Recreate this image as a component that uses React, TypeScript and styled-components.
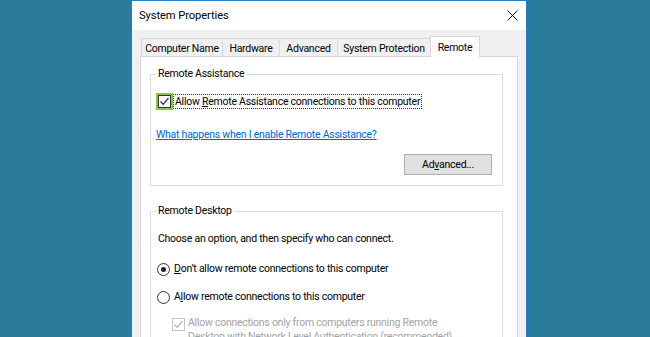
import React from "react";
import styled, { createGlobalStyle } from "styled-components";

const GlobalStyle = createGlobalStyle`
  html, body {
    margin: 0;
    padding: 0;
  }
  body {
    background: #2b7c9c;
    font-family: Roboto, "Liberation Sans", sans-serif;
    font-size: 10.5px;
    letter-spacing: -0.25px;
    color: #000;
    overflow: hidden;
  }
`;

const Desktop = styled.div`
  width: 650px;
  height: 337px;
  box-sizing: border-box;
  padding-left: 131px;
  overflow: hidden;
  background: #2b7c9c;
`;

const Window = styled.div`
  width: 396px;
  height: 420px;
  box-sizing: border-box;
  border: 1px solid #1d7fcf;
  background: #f0f0f0;
  display: flex;
  flex-direction: column;
`;

const TitleBar = styled.div`
  height: 29px;
  flex: none;
  display: flex;
  align-items: center;
  justify-content: space-between;
  padding-left: 7px;
  background: #fff;
  font-size: 11.2px;
  letter-spacing: -0.1px;
`;

const CloseButton = styled.div`
  width: 28px;
  height: 29px;
  display: flex;
  align-items: center;
  justify-content: center;
`;

const Client = styled.div`
  flex: 1;
  display: flex;
  flex-direction: column;
  padding: 6px 8px 0 8px;
`;

const TabStrip = styled.div`
  height: 20px;
  display: flex;
  align-items: flex-end;
  padding-left: 1px;
`;

const Tab = styled.div<{ $w: number; $active?: boolean }>`
  width: ${(p) => p.$w}px;
  height: ${(p) => (p.$active ? 21 : 18)}px;
  margin-right: -1px;
  margin-bottom: ${(p) => (p.$active ? -1 : 0)}px;
  box-sizing: border-box;
  border: 1px solid #d9d9d9;
  border-bottom: none;
  background: ${(p) => (p.$active ? "#fff" : "#f0f0f0")};
  position: relative;
  z-index: ${(p) => (p.$active ? 2 : 1)};
  display: flex;
  align-items: center;
  justify-content: center;
  padding-top: ${(p) => (p.$active ? 0 : 1)}px;
  white-space: nowrap;
`;

const Panel = styled.div`
  flex: 1;
  background: #fff;
  border: 1px solid #d9d9d9;
  padding: 10px 14px 0 9px;
`;

const GroupBox = styled.fieldset<{ $gap?: number }>`
  margin: ${(p) => p.$gap ?? 0}px 0 0 0;
  padding: 0 10px 10px 5px;
  border: 1px solid #dcdcdc;
  min-width: 0;
  display: flex;
  flex-direction: column;
`;

const Legend = styled.legend`
  padding: 0 2px;
  line-height: 14px;
`;

const Row = styled.div<{ $top: number; $indent?: number }>`
  display: flex;
  align-items: center;
  margin-top: ${(p) => p.$top}px;
  margin-left: ${(p) => p.$indent ?? 0}px;
  line-height: 14px;
`;

const Box = styled.span<{ $focus?: boolean; $disabled?: boolean }>`
  width: 13px;
  height: 13px;
  flex: none;
  box-sizing: border-box;
  margin-left: 2px;
  border: 1px solid ${(p) => (p.$disabled ? "#c4c4c4" : "#333")};
  background: #fff;
  outline: ${(p) => (p.$focus ? "2px solid #86c44a" : "none")};
  display: flex;
  align-items: center;
  justify-content: center;
`;

const FocusLabel = styled.span`
  margin-left: 2px;
  padding: 0 1px;
  line-height: 13px;
  border: 1px dotted #333;
`;

const Link = styled.a`
  color: #0066cc;
  text-decoration: underline;
  line-height: 14px;
  margin-top: 19px;
`;

const ButtonRow = styled.div`
  display: flex;
  justify-content: flex-end;
  margin-top: 12px;
`;

const Button = styled.div`
  width: 88px;
  height: 21px;
  box-sizing: border-box;
  border: 1px solid #adadad;
  background: #e1e1e1;
  display: flex;
  align-items: center;
  justify-content: center;
`;

const Text = styled.div<{ $top: number }>`
  margin-top: ${(p) => p.$top}px;
  line-height: 14px;
  padding-left: 2px;
`;

const Radio = styled.span<{ $on?: boolean }>`
  width: 13px;
  height: 13px;
  flex: none;
  box-sizing: border-box;
  margin-left: 1px;
  border: 1px solid #333;
  border-radius: 50%;
  background: #fff;
  display: flex;
  align-items: center;
  justify-content: center;
  &::after {
    content: "";
    width: 5px;
    height: 5px;
    border-radius: 50%;
    background: ${(p) => (p.$on ? "#222" : "transparent")};
  }
`;

const RadioLabel = styled.span`
  margin-left: 4px;
`;

const SubOption = styled.div`
  display: flex;
  align-items: flex-start;
  margin-top: 12px;
  margin-left: 14px;
  line-height: 14px;
  color: #a3a3a3;
`;

const SubBox = styled(Box)`
  margin-top: 2px;
`;

const SubText = styled.span`
  margin-left: 3px;
`;

const Check = ({ color }: { color: string }) => (
  <svg width="11" height="11" viewBox="0 0 11 11">
    <path d="M1.5 5.5 L4.2 8.3 L9.5 2" fill="none" stroke={color} strokeWidth="1.3" />
  </svg>
);

const tabs = [
  { label: "Computer Name", w: 82 },
  { label: "Hardware", w: 58 },
  { label: "Advanced", w: 59 },
  { label: "System Protection", w: 94 },
  { label: "Remote", w: 50, active: true },
];

export default function App() {
  return (
    <>
      <GlobalStyle />
      <Desktop>
        <Window>
          <TitleBar>
            <span>System Properties</span>
            <CloseButton>
              <svg width="11" height="11" viewBox="0 0 11 11">
                <path d="M0.5 0.5 L10.5 10.5 M10.5 0.5 L0.5 10.5" stroke="#111" strokeWidth="1" />
              </svg>
            </CloseButton>
          </TitleBar>
          <Client>
            <TabStrip>
              {tabs.map((t) => (
                <Tab key={t.label} $w={t.w} $active={t.active}>
                  {t.label}
                </Tab>
              ))}
            </TabStrip>
            <Panel>
              <GroupBox>
                <Legend>Remote Assistance</Legend>
                <Row $top={13}>
                  <Box $focus>
                    <Check color="#333" />
                  </Box>
                  <FocusLabel>
                    Allow <u>R</u>emote Assistance connections to this computer
                  </FocusLabel>
                </Row>
                <Link>What happens when I enable Remote Assistance?</Link>
                <ButtonRow>
                  <Button>
                    <span>
                      Ad<u>v</u>anced...
                    </span>
                  </Button>
                </ButtonRow>
              </GroupBox>
              <GroupBox $gap={18}>
                <Legend>Remote Desktop</Legend>
                <Text $top={14}>Choose an option, and then specify who can connect.</Text>
                <Row $top={16}>
                  <Radio $on />
                  <RadioLabel>
                    <u>D</u>on’t allow remote connections to this computer
                  </RadioLabel>
                </Row>
                <Row $top={14}>
                  <Radio />
                  <RadioLabel>
                    A<u>l</u>low remote connections to this computer
                  </RadioLabel>
                </Row>
                <SubOption>
                  <SubBox $disabled>
                    <Check color="#b8b8b8" />
                  </SubBox>
                  <SubText>
                    Allow connections only from computers running Remote
                    <br />
                    Desktop with Network Level Authentication (recommended)
                  </SubText>
                </SubOption>
              </GroupBox>
            </Panel>
          </Client>
        </Window>
      </Desktop>
    </>
  );
}
